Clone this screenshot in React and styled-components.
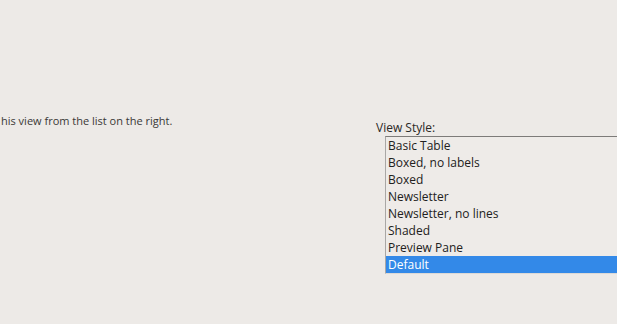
import styled, { createGlobalStyle } from "styled-components";

const GlobalStyle = createGlobalStyle`
  html, body {
    margin: 0;
    padding: 0;
    background: #edeae7;
    overflow: hidden;
  }
  body {
    font-family: "Open Sans", "Noto Sans", "DejaVu Sans", sans-serif;
  }
`;

const styles = [
  "Basic Table",
  "Boxed, no labels",
  "Boxed",
  "Newsletter",
  "Newsletter, no lines",
  "Shaded",
  "Preview Pane",
  "Default",
];

export default function App() {
  return (
    <>
      <GlobalStyle />
      <Page>
        <Description>
          <Hint>his view from the list on the right.</Hint>
        </Description>
        <StylePicker>
          <Label>View Style:</Label>
          <ListBox>
            {styles.map((name) => (
              <ListItem key={name} selected={name === "Default"}>
                {name}
              </ListItem>
            ))}
          </ListBox>
        </StylePicker>
      </Page>
    </>
  );
}

const Page = styled.div`
  width: 617px;
  height: 324px;
  display: flex;
  align-items: flex-start;
  overflow: hidden;
`;

const Description = styled.div`
  width: 376px;
  flex-shrink: 0;
  padding-top: 113px;
`;

const Hint = styled.p`
  margin: 0 0 0 1px;
  font-size: 11px;
  line-height: 15px;
  color: #3a3836;
  white-space: nowrap;
`;

const StylePicker = styled.div`
  flex: 1;
  padding-top: 119px;
  display: flex;
  flex-direction: column;
`;

const Label = styled.div`
  font-size: 12px;
  line-height: 17px;
  color: #2a2826;
  margin-bottom: 0;
`;

const ListBox = styled.div`
  margin-left: 9px;
  width: 260px;
  border-top: 1px solid #7d7b79;
  border-left: 1px solid #a9a7a5;
  border-bottom: 1px solid #dcd9d6;
  background: #eeebe8;
  display: flex;
  flex-direction: column;
`;

const ListItem = styled.div`
  height: 17px;
  line-height: 17px;
  padding-left: 2px;
  font-size: 12px;
  color: ${(p) => (p.selected ? "#ffffff" : "#222120")};
  background: ${(p) => (p.selected ? "#3389e8" : "transparent")};
  white-space: nowrap;
`;
